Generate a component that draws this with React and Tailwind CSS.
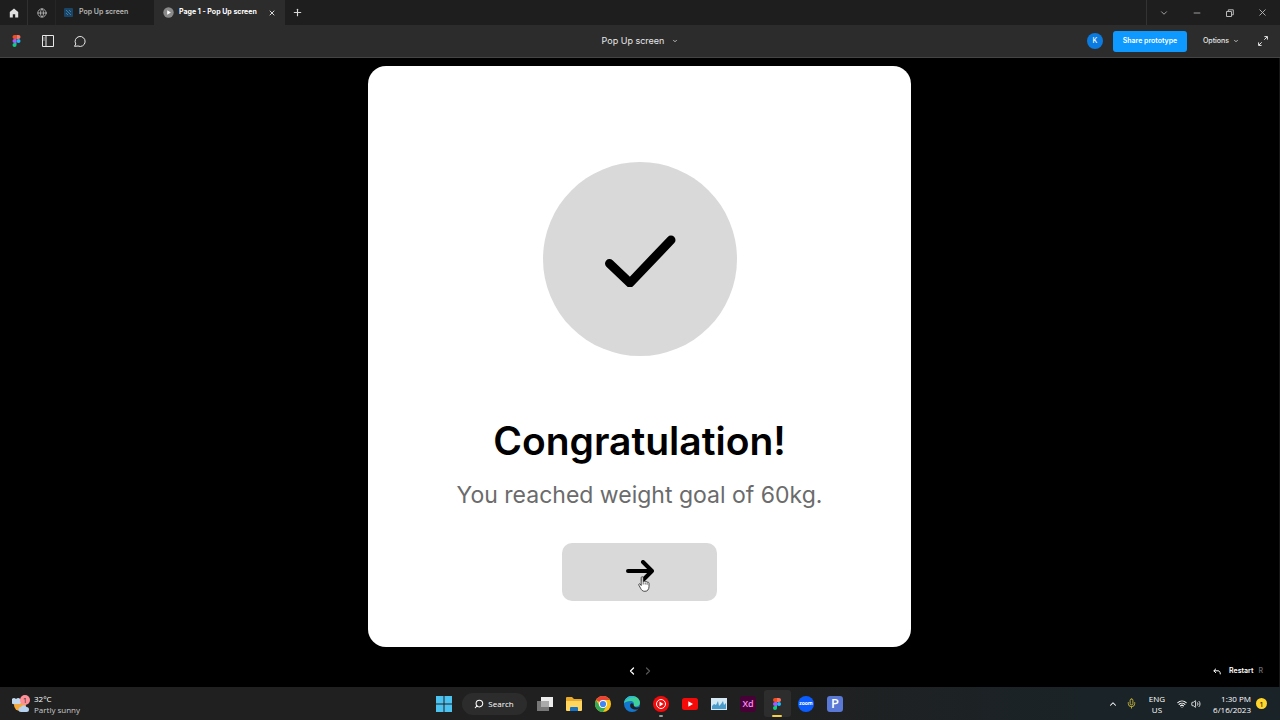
import React from 'react';
import { ChevronDown, ChevronLeft, ChevronRight, ChevronUp, Globe, Mic, Minus, Plus, Search, Volume2, Wifi, X } from 'lucide-react';

function FigmaLogo({ className }) {
  return (
    <svg viewBox="0 0 20 30" className={className} aria-hidden="true">
      <path d="M5 0h5v10H5A5 5 0 0 1 5 0Z" fill="#f24e1e" />
      <path d="M10 0h5a5 5 0 0 1 0 10h-5Z" fill="#ff7262" />
      <path d="M5 10h5v10H5a5 5 0 0 1 0-10Z" fill="#a259ff" />
      <circle cx="15" cy="15" r="5" fill="#1abcfe" />
      <path d="M5 20h5v5a5 5 0 1 1-5-5Z" fill="#0acf83" />
    </svg>
  );
}

function TabBar() {
  return (
    <header className="flex h-[25px] items-stretch bg-[#1e1e1e] pr-px text-[7px] text-[#b8b8b8]">
      <button aria-label="Home" className="flex w-7 items-center justify-center border-r border-[#303030]">
        <svg viewBox="0 0 10 10" className="size-[10px]">
          <path d="M5 .5 9.2 4v5.5H6.2V6.3H3.8v3.2H.8V4Z" fill="#e0e0e0" />
        </svg>
      </button>
      <button aria-label="Community" className="flex w-7 items-center justify-center border-r border-[#262626]">
        <Globe size={10} strokeWidth={2} />
      </button>
      <button className="flex w-[98px] items-center gap-1.5 pl-2 font-semibold">
        <svg viewBox="0 0 9 9" className="size-[9px]">
          <rect width="9" height="9" rx="1" fill="#1b4566" />
          <path d="m2 2 5 5M5 2l2 2M2 5l2 2" stroke="#3f7ea8" strokeWidth="1" />
        </svg>
        Pop Up screen
      </button>
      <div className="flex w-[131px] items-center justify-between bg-[#2c2c2c] px-[9px]">
        <button className="flex items-center gap-[5px] font-bold whitespace-nowrap text-white">
          <svg viewBox="0 0 11 11" className="size-[11px]">
            <circle cx="5.5" cy="5.5" r="5.2" fill="#8a8a8a" />
            <path d="M4.2 3.2v4.6l3.7-2.3Z" fill="#fff" />
          </svg>
          Page 1 - Pop Up screen
        </button>
        <button aria-label="Close tab">
          <X size={8} strokeWidth={3} color="#d8d8d8" />
        </button>
      </div>
      <button aria-label="New tab" className="flex w-6 items-center justify-center">
        <Plus size={11} strokeWidth={2.5} color="#d8d8d8" />
      </button>
      <div className="ml-auto flex border-l border-[#333333]">
        <button aria-label="Tab list" className="flex w-[33px] items-center justify-center"><ChevronDown size={10} /></button>
        <button aria-label="Minimize" className="flex w-[33px] items-center justify-center"><Minus size={10} /></button>
        <button aria-label="Restore" className="flex w-[33px] items-center justify-center">
          <svg viewBox="0 0 8 8" className="size-2" fill="none" stroke="currentColor">
            <path d="M.5 2.5h5v5h-5ZM2.3 2.3V.8h5v5H5.8" />
          </svg>
        </button>
        <button aria-label="Close" className="flex w-[33px] items-center justify-center"><X size={11} /></button>
      </div>
    </header>
  );
}

function Toolbar() {
  return (
    <div className="grid h-[33px] grid-cols-[1fr_auto_1fr] items-center border-b border-[#444444] bg-[#2c2c2c] text-[7px] text-[#e8e8e8]">
      <div className="flex">
        <button aria-label="Figma menu" className="flex w-8 justify-center"><FigmaLogo className="h-3 w-[9px]" /></button>
        <button aria-label="Toggle sidebar" className="flex w-8 justify-center">
          <svg viewBox="0 0 12 12" className="size-3" fill="none" stroke="currentColor">
            <path d="M.5.5h11v11H.5ZM4 .5v11M1.5 3h1M1.5 5h1" />
          </svg>
        </button>
        <button aria-label="Comments" className="flex w-8 justify-center">
          <svg viewBox="0 0 12 12" className="size-3" fill="none" stroke="currentColor">
            <path d="M.5 11.3 1.8 9A5 5 0 1 1 4 11Z" />
          </svg>
        </button>
      </div>
      <button className="flex items-center gap-2 text-[9px]">
        Pop Up screen
        <ChevronDown size={6} strokeWidth={3} />
      </button>
      <div className="flex items-center justify-end pr-3">
        <span className="flex size-4 items-center justify-center rounded-full bg-[#0a7be0] font-medium text-white">K</span>
        <button className="ml-[10px] h-[21px] w-[74px] rounded-[3px] bg-[#0d99ff] font-semibold text-white">Share prototype</button>
        <button className="ml-4 flex items-center gap-1 font-medium">
          Options
          <ChevronDown size={6} strokeWidth={3} />
        </button>
        <button aria-label="Full screen" className="ml-[19px]">
          <svg viewBox="0 0 10 10" className="size-[10px]" fill="none" stroke="currentColor">
            <path d="M6.3 3.7 9.3.7M6.4.6h3v3M3.7 6.3l-3 3M.6 6.4v3h3" />
          </svg>
        </button>
      </div>
    </div>
  );
}

function HandCursor() {
  return (
    <svg viewBox="0 0 12 16" className="absolute top-[33px] left-[76px] h-4 w-3" aria-hidden="true">
      <path
        d="M3.2 9.5V1.8c0-1.6 2-1.6 2 0v4c.2-1 1.9-1 2 .2.3-.8 1.8-.6 1.9.4.5-.6 1.9-.3 1.9 1v3.2c0 2.7-1.4 4.7-4.1 4.7-2.4 0-3.4-1.2-4.3-3L.9 9.2c-.6-1.2.6-1.9 1.4-1Z"
        fill="#fff"
        stroke="#222"
        strokeWidth=".8"
      />
      <path d="M5.2 6v2.5M7.2 6.5v2M9.1 6.8v2" stroke="#222" strokeWidth=".7" />
    </svg>
  );
}

function SuccessCard() {
  return (
    <section className="flex w-full max-w-[543px] flex-col items-center rounded-[18px] bg-white px-6 pt-24 pb-[46px] text-center">
      <div className="flex size-[194px] items-center justify-center rounded-full bg-[#d9d9d9]">
        <svg viewBox="0 0 72 56" className="h-14 w-[72px]" fill="none" stroke="#000" strokeWidth="9" strokeLinecap="round" strokeLinejoin="round" aria-hidden="true">
          <path d="m5.5 32.500 20.500 19.500L67 9" />
        </svg>
      </div>
      <h1 className="mt-[61px] text-[39px] leading-[48px] font-semibold text-black">Congratulation!</h1>
      <p className="mt-[14px] text-[23px] leading-8 text-[#6b6b6b]">You reached weight goal of 60kg.</p>
      <button aria-label="Continue" className="relative mt-8 flex h-[58px] w-[155px] cursor-pointer items-center justify-center rounded-[10px] bg-[#d9d9d9] pb-0.5">
        <svg viewBox="0 0 28 22" className="h-[22px] w-7" fill="none" stroke="#000" strokeWidth="4" strokeLinecap="round" strokeLinejoin="round">
          <path d="M2 11h24M17 2l9 9-9 9" />
        </svg>
        <HandCursor />
      </button>
    </section>
  );
}

function Stage() {
  return (
    <main className="flex grow flex-col items-center border-r border-[#161616] bg-black pt-2">
      <SuccessCard />
      <div className="grid w-full grow grid-cols-[1fr_auto_1fr] items-center pt-2 text-[7px] text-white">
        <div className="col-start-2 flex gap-1">
          <button aria-label="Previous frame"><ChevronLeft size={12} strokeWidth={2.5} /></button>
          <button aria-label="Next frame"><ChevronRight size={12} strokeWidth={2.5} color="#555555" /></button>
        </div>
        <button className="flex items-center justify-self-end pr-4 font-semibold">
          <svg viewBox="0 0 8 7" className="mr-2 h-[7px] w-2" fill="none" stroke="currentColor">
            <path d="M3 .7.8 2.8 3 4.9M.8 2.8h4.200c1.500 0 2.300 1 2.300 3.500" />
          </svg>
          Restart
          <span className="ml-[5px] text-[#666666]">R</span>
        </button>
      </div>
    </main>
  );
}

function WindowsIcon() {
  return (
    <svg viewBox="0 0 16 16" className="size-4">
      <path d="M0 0h7.500v7.500H0ZM8.500 0H16v7.500H8.500ZM0 8.500h7.500V16H0ZM8.500 8.500H16V16H8.500Z" fill="#4cc2f1" />
    </svg>
  );
}

function TaskViewIcon() {
  return (
    <svg viewBox="0 0 16 16" className="size-4">
      <rect x="4" y="1" width="12" height="10" fill="#ececec" />
      <rect x="0" y="5" width="12" height="10" fill="#777" />
      <rect x="4" y="5" width="8" height="6" fill="#aaa" />
    </svg>
  );
}

function FolderIcon() {
  return (
    <svg viewBox="0 0 16 16" className="size-4">
      <path d="M0 2a1 1 0 0 1 1-1h5l2 2h7a1 1 0 0 1 1 1v10H0Z" fill="#e8a92c" />
      <path d="M0 5h16v9a1 1 0 0 1-1 1H1a1 1 0 0 1-1-1Z" fill="#ffd560" />
      <path d="M4 15v-3a1 1 0 0 1 1-1h6a1 1 0 0 1 1 1v3Z" fill="#1672c4" />
    </svg>
  );
}

function ChromeIcon() {
  return (
    <svg viewBox="0 0 16 16" className="size-4">
      <circle cx="8" cy="8" r="8" fill="#fbc116" />
      <path d="M8 8 1.070 4A8 8 0 0 1 14.930 4H8Z" fill="#ea4335" />
      <path d="M1.070 4A8 8 0 0 0 8 16l3.500-6L8 8 4.500 10Z" fill="#34a853" />
      <circle cx="8" cy="8" r="4" fill="#fff" />
      <circle cx="8" cy="8" r="3.100" fill="#4285f4" />
    </svg>
  );
}

function EdgeIcon() {
  return (
    <svg viewBox="0 0 16 16" className="size-4">
      <circle cx="8" cy="8" r="8" fill="#1377cf" />
      <path d="M0 7.500C.4 3.200 3.600 0 8 0c4.800 0 8 3.400 8 6.800 0 2.300-1.700 3.800-4 3.800-1.600 0-2.600-.6-2.300-1.300 1-2-.4-4.300-3-4.300C3.500 5 .8 6.300 0 7.500Z" fill="#3fcf9a" />
      <path d="M0 7.500C.4 3.200 3.600 0 8 0c2 0 3 .8 3 2-2-1-8-.5-11 5.500Z" fill="#2bb5dc" />
      <path d="M6.500 8c-1.500 3 1.500 6.500 7.500 5.300 1-.8 1.500-1.700 1.700-2.500-3 1.500-6 .2-6-1.500 0-1.700-2.200-2.800-3.200-1.300Z" fill="#202020" />
    </svg>
  );
}

function YtMusicIcon() {
  return (
    <svg viewBox="0 0 16 16" className="size-4">
      <circle cx="8" cy="8" r="8" fill="#f30b0b" />
      <circle cx="8" cy="8" r="4.500" fill="none" stroke="#fff" />
      <path d="M6.500 5.500v5l4-2.500Z" fill="#fff" />
    </svg>
  );
}

function YoutubeIcon() {
  return (
    <svg viewBox="0 0 16 16" className="size-4">
      <rect y="2" width="16" height="12" rx="2.500" fill="#f50a0a" />
      <path d="M6.300 5.200v5.600L11 8Z" fill="#fff" />
    </svg>
  );
}

function MonitorIcon() {
  return (
    <svg viewBox="0 0 16 16" className="size-4">
      <rect y="2" width="16" height="12" fill="#d5e9f5" />
      <path d="M1 13v-3l2-2 2 1 2-4 1 5 2-2 2-3 1 4 2-2v6Z" fill="#4a9bc9" />
    </svg>
  );
}

const apps = [
  { name: 'Task View', icon: <TaskViewIcon /> },
  { name: 'File Explorer', icon: <FolderIcon /> },
  { name: 'Chrome', icon: <ChromeIcon /> },
  { name: 'Edge', icon: <EdgeIcon /> },
  { name: 'YouTube Music', icon: <YtMusicIcon />, mark: 'w-1 bg-[#9a9a9a]' },
  { name: 'YouTube', icon: <YoutubeIcon /> },
  { name: 'System Monitor', icon: <MonitorIcon /> },
  {
    name: 'Adobe XD',
    icon: <span className="flex size-4 items-center justify-center rounded-[3px] bg-[#470137] text-[9px] font-semibold text-[#ff8af8]">Xd</span>,
  },
  { name: 'Figma', icon: <FigmaLogo className="h-3 w-2" />, active: true, mark: 'w-[10px] bg-[#f5cf45]' },
  {
    name: 'Zoom',
    icon: <span className="flex size-4 items-center justify-center rounded-full bg-[#0b5cff] text-[5px] font-bold text-white">zoom</span>,
  },
  {
    name: 'PicPick',
    icon: <span className="flex size-4 items-center justify-center rounded-[3px] bg-[#5a78d6] text-[13px] leading-none font-semibold text-white">P</span>,
  },
];

function Taskbar() {
  return (
    <footer className="grid h-[33px] grid-cols-[1fr_auto_1fr] items-center bg-linear-to-r from-[#202020] from-60% to-[#1a2327] to-85% font-['Open_Sans','Noto_Sans',sans-serif] text-[8px] leading-[11px] text-white">
      <button className="flex items-center gap-1 pl-3 text-left">
        <svg viewBox="0 0 18 18" className="size-[18px]" aria-hidden="true">
          <circle cx="8" cy="10" r="6" fill="#f5a93a" />
          <path d="M3 9a3 3 0 1 1 1-5 3 3 0 0 1 4 5Z" fill="#c3d8ec" />
          <path d="M9 17a2.500 2.500 0 0 1 0-5 3 3 0 0 1 5.500 0 2.500 2.500 0 0 1 0 5Z" fill="#b7d2ee" />
          <circle cx="13" cy="5" r="5" fill="#ff8e96" />
          <text x="13" y="7.500" textAnchor="middle" fontSize="7" fill="#222">1</text>
        </svg>
        <span>
          32°C
          <br />
          <span className="text-[#c8c8c8]">Partly sunny</span>
        </span>
      </button>
      <nav className="flex items-center pl-[5px]">
        <button aria-label="Start" className="flex w-[26px] justify-start"><WindowsIcon /></button>
        <button className="mr-1 flex h-[22px] w-[65px] items-center justify-center gap-1 rounded-full bg-[#2c2c2c]">
          <Search size={10} strokeWidth={2.5} className="-scale-x-100" />
          Search
        </button>
        {apps.map((app) => (
          <button
            key={app.name}
            aria-label={app.name}
            className={`relative mx-px flex h-[27px] w-[27px] items-center justify-center rounded-[3px] ${app.active ? 'bg-[#2d2d2d]' : ''}`}
          >
            {app.icon}
            {app.mark && <span className={`absolute bottom-0 h-0.5 rounded-full ${app.mark}`} />}
          </button>
        ))}
      </nav>
      <div className="flex items-center justify-end pr-[13px]">
        <button aria-label="Hidden icons"><ChevronUp size={10} strokeWidth={2.5} /></button>
        <Mic size={11} className="ml-2" color="#c9b83a" />
        <span className="ml-3 text-center">
          ENG
          <br />
          US
        </span>
        <Wifi size={10} strokeWidth={2.5} className="ml-3" />
        <Volume2 size={10} strokeWidth={2} className="ml-1" />
        <span className="ml-3 text-right">
          1:30 PM
          <br />
          6/16/2023
        </span>
        <span className="ml-[5px] flex size-[11px] items-center justify-center rounded-full bg-[#ffd52e] text-black">1</span>
      </div>
    </footer>
  );
}

export default function App() {
  return (
    <div className="flex min-h-screen flex-col bg-black font-['Inter',sans-serif]">
      <TabBar />
      <Toolbar />
      <Stage />
      <Taskbar />
    </div>
  );
}
